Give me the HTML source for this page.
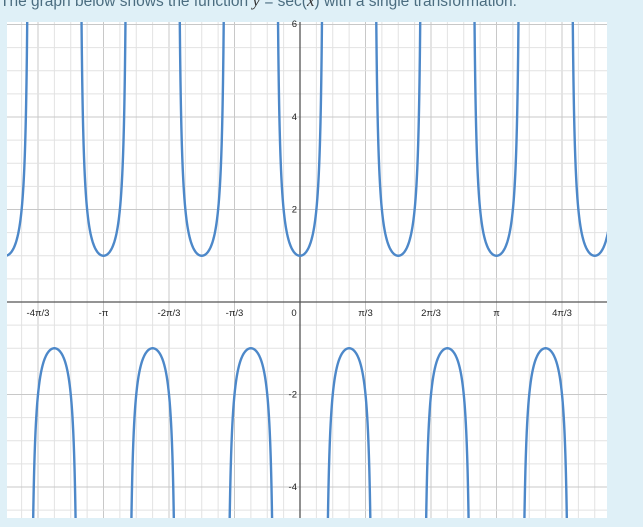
<!DOCTYPE html>
<html><head><meta charset="utf-8"><style>
html,body{margin:0;padding:0;width:643px;height:527px;overflow:hidden;background:#dff0f7;font-family:"Liberation Sans",sans-serif}
#t{position:absolute;left:0;top:-9px;font-size:15.5px;color:#4b6d80;white-space:nowrap}
#t i{font-family:"Liberation Serif",serif;font-size:17px;color:#333}
svg{position:absolute;left:0;top:0}
</style></head><body>
<div id="t">The graph below shows the function <i>y</i> = sec(<i>x</i>) with a single transformation.</div>
<svg id="s" width="643" height="527" xmlns="http://www.w3.org/2000/svg"></svg>
<script>
var s=document.getElementById('s'),X0=7,X1=607,Y0=22,Y1=518,ox=300,oy=302,ux=65.5*3/Math.PI,uy=46.25;
var h='<defs><clipPath id="c"><rect x="'+X0+'" y="'+Y0+'" width="'+(X1-X0)+'" height="'+(Y1-Y0)+'"/></clipPath></defs>';
h+='<rect x="'+X0+'" y="'+Y0+'" width="'+(X1-X0)+'" height="'+(Y1-Y0)+'" fill="#fff"/>';
var st=Math.PI/12*ux;
for(var k=-20;k<=20;k++){var x=ox+k*st;if(x<X0||x>X1)continue;var maj=k%4==0;h+='<line x1="'+x+'" y1="'+Y0+'" x2="'+x+'" y2="'+Y1+'" stroke="'+(maj?'#c8c8c8':'#e2e2e2')+'" stroke-width="1"/>';}
for(var k=-12;k<=14;k++){var y=oy-k*uy/2;if(y<Y0||y>Y1)continue;var maj=k%4==0;h+='<line x1="'+X0+'" y1="'+y+'" x2="'+X1+'" y2="'+y+'" stroke="'+(maj?'#c8c8c8':'#e2e2e2')+'" stroke-width="1"/>';}
h+='<line x1="'+X0+'" y1="'+oy+'" x2="'+X1+'" y2="'+oy+'" stroke="#555" stroke-width="1.3"/>';
h+='<line x1="'+ox+'" y1="'+Y0+'" x2="'+ox+'" y2="'+Y1+'" stroke="#555" stroke-width="1.3"/>';
var d='';
for(var n=-8;n<=8;n++){var a=(n*Math.PI/4-Math.PI/8),b=(n*Math.PI/4+Math.PI/8);var first=true;
for(var i=1;i<400;i++){var x=a+(b-a)*i/400;var v=1/Math.cos(4*x);var px=ox+x*ux,py=oy-v*uy;if(py<Y0-20)py=Y0-20;if(py>Y1+20)py=Y1+20;
d+=(first?'M':'L')+px.toFixed(2)+' '+py.toFixed(2);first=false;}}
h+='<path d="'+d+'" fill="none" stroke="#4d88c9" stroke-width="2.4" clip-path="url(#c)"/>';
var L=[['-4π/3',-4],['-π',-3],['-2π/3',-2],['-π/3',-1],['0',0],['π/3',1],['2π/3',2],['π',3],['4π/3',4]];
L.forEach(function(l){var x=ox+l[1]*Math.PI/3*ux+(l[1]==0?-6:0);h+='<text x="'+x+'" y="316" text-anchor="middle" font-size="9.5" fill="#222" font-family="Liberation Sans">'+l[0]+'</text>';});
[[4,'4'],[2,'2'],[-2,'-2'],[-4,'-4']].forEach(function(l){var y=oy-l[0]*uy+3;h+='<text x="'+(ox-3)+'" y="'+y+'" text-anchor="end" font-size="9.5" fill="#222" font-family="Liberation Sans">'+l[1]+'</text>';});
h+='<text x="297" y="27" text-anchor="end" font-size="9.5" fill="#222" font-family="Liberation Sans">6</text>';
s.innerHTML=h;
</script>
</body></html>
